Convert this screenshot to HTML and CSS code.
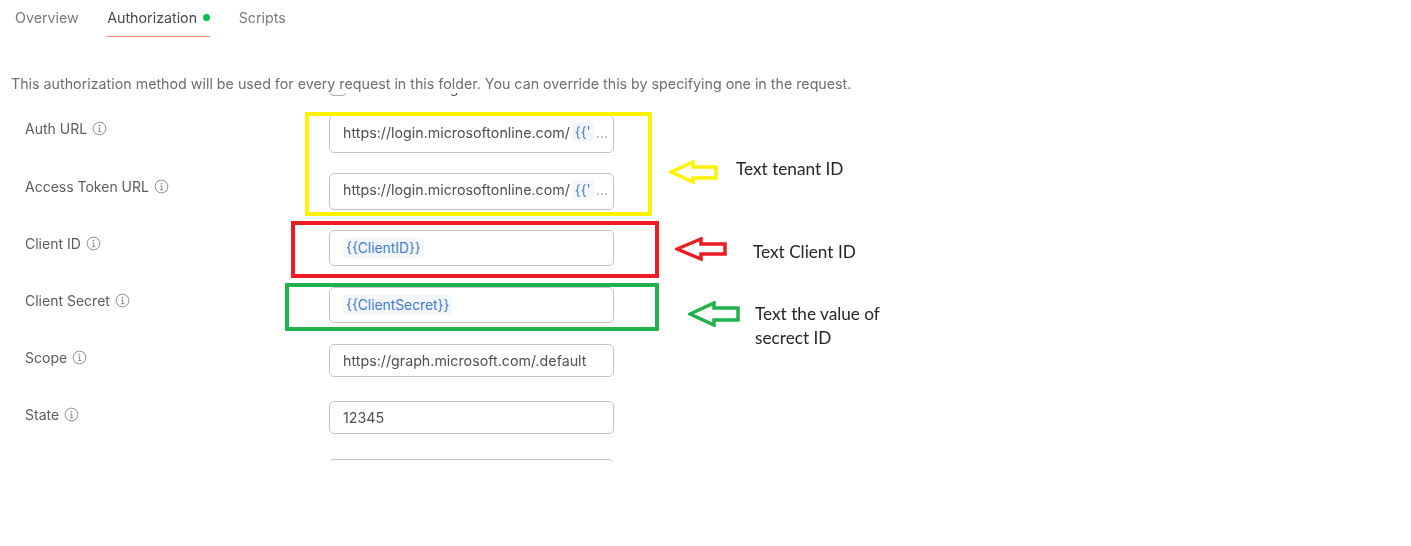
FILE: index.html
```html
<!DOCTYPE html>
<html lang="en">
<head>
  <meta charset="UTF-8">
  <meta name="viewport" content="width=device-width, initial-scale=1.0">
  <title>Folder Authorization</title>
  <link rel="stylesheet" href="styles.css">
</head>
<body>
  <!-- Tabs -->
  <div class="tabs">
    <div class="tab">Overview</div>
    <div class="tab active">Authorization <span class="dot"></span></div>
    <div class="tab">Scripts</div>
  </div>

  <p class="description">This authorization method will be used for every request in this folder. You can override this by specifying one in the request.</p>

  <!-- Form, scrolled so the top and bottom rows are cut off -->
  <div class="form">
    <div class="cut-row">
      <div class="cut-inner"><span class="checkbox"></span><span>Authorize using browser</span></div>
    </div>

    <div class="row first">
      <div class="label">Auth URL <svg class="info" viewBox="0 0 16 16"><circle cx="8" cy="8" r="6.8"/><path d="M6.6 7.3H8.2V11.4M6.4 11.4H10"/><circle class="info-dot" cx="8" cy="4.9" r="0.9"/></svg></div>
      <div class="field h38"><span class="value">https://login.microsoftonline.com/</span><span class="pill short">{{'</span><span class="more">...</span></div>
    </div>
    <div class="row">
      <div class="label">Access Token URL <svg class="info" viewBox="0 0 16 16"><circle cx="8" cy="8" r="6.8"/><path d="M6.6 7.3H8.2V11.4M6.4 11.4H10"/><circle class="info-dot" cx="8" cy="4.9" r="0.9"/></svg></div>
      <div class="field h37"><span class="value">https://login.microsoftonline.com/</span><span class="pill short">{{'</span><span class="more">...</span></div>
    </div>
    <div class="row">
      <div class="label">Client ID <svg class="info" viewBox="0 0 16 16"><circle cx="8" cy="8" r="6.8"/><path d="M6.6 7.3H8.2V11.4M6.4 11.4H10"/><circle class="info-dot" cx="8" cy="4.9" r="0.9"/></svg></div>
      <div class="field h36"><span class="pill">{{ClientID}}</span></div>
    </div>
    <div class="row">
      <div class="label">Client Secret <svg class="info" viewBox="0 0 16 16"><circle cx="8" cy="8" r="6.8"/><path d="M6.6 7.3H8.2V11.4M6.4 11.4H10"/><circle class="info-dot" cx="8" cy="4.9" r="0.9"/></svg></div>
      <div class="field h36"><span class="pill">{{ClientSecret}}</span></div>
    </div>
    <div class="row">
      <div class="label">Scope <svg class="info" viewBox="0 0 16 16"><circle cx="8" cy="8" r="6.8"/><path d="M6.6 7.3H8.2V11.4M6.4 11.4H10"/><circle class="info-dot" cx="8" cy="4.9" r="0.9"/></svg></div>
      <div class="field h33"><span class="value">https://graph.microsoft.com/.default</span></div>
    </div>
    <div class="row last">
      <div class="label">State <svg class="info" viewBox="0 0 16 16"><circle cx="8" cy="8" r="6.8"/><path d="M6.6 7.3H8.2V11.4M6.4 11.4H10"/><circle class="info-dot" cx="8" cy="4.9" r="0.9"/></svg></div>
      <div class="field h33"><span class="value">12345</span></div>
    </div>
    <div class="row">
      <div class="label"></div>
      <div class="field h33"></div>
    </div>
  </div>

  <!-- Annotations drawn over the screenshot -->
  <div class="mark mark-yellow"></div>
  <div class="mark mark-red"></div>
  <div class="mark mark-green"></div>

  <svg class="arrow arrow-yellow" viewBox="0 0 50 24"><path d="M2 12L24 2V7H47V18H24V22Z"/></svg>
  <svg class="arrow arrow-red" viewBox="0 0 52 24"><path d="M2 12L26 2V7H50V17H26V22Z"/></svg>
  <svg class="arrow arrow-green" viewBox="0 0 52 26"><path d="M2 13L26 2V7H50V19H26V24Z"/></svg>

  <div class="note note-tenant">Text tenant ID</div>
  <div class="note note-client">Text Client ID</div>
  <div class="note note-secret">Text the value of<br>secrect ID</div>
</body>
</html>
```

FILE: styles.css
```css
body {
  font-family: Inter, "Liberation Sans", sans-serif;
  font-size: 14.26px;
  margin: 0;
  padding: 0;
  background-color: #fff;
  color: #4f4f4f;
  height: 546px;
  overflow: hidden;
  position: relative;
  filter: blur(0.35px); /* the reference is a soft, rescaled screenshot */
}

/* Tabs */
.tabs {
  display: flex;
  gap: 28.5px;
  padding-left: 15px;
  height: 37px;
}
.tab {
  color: #7a7a7a;
  line-height: 36px;
  height: 37px;
  box-sizing: border-box;
}
.tab.active {
  color: #4a4a4a;
  border-bottom: 1px solid #f0845c;
  width: 103px;
  white-space: nowrap;
}
.dot {
  display: inline-block;
  width: 7px;
  height: 7px;
  margin-left: 2px;
  border-radius: 50%;
  background-color: #0cbb52;
  vertical-align: 2px;
}

.description {
  margin: 38px 0 0 11px;
  line-height: 18px;
  color: #6f6f6f;
  white-space: nowrap;
}

/* Form */
.form {
  height: 368px;
  overflow: hidden;
  padding-left: 25px;
}
.cut-row {
  height: 5px;
  margin-top: -2px;
  overflow: hidden;
  padding-left: 305px;
}
.cut-inner {
  display: flex;
  align-items: center;
  gap: 7px;
  height: 16px;
  margin-top: -11px;
  line-height: 16px;
  white-space: nowrap;
}
.checkbox {
  display: block;
  width: 14px;
  height: 14px;
  border: 1px solid #b0b0b0;
  border-radius: 3px;
}
.row {
  display: grid;
  grid-template-columns: 304px 285px;
  height: 57px;
}
.row.first {
  margin-top: 19px;
  height: 58px;
}
.row.last {
  height: 58px;
}
.label {
  font-size: 14px;
  color: #5c5c5c;
  display: flex;
  align-items: center;
  gap: 5px;
  height: 27px;
}
.info {
  width: 15px;
  height: 15px;
  fill: none;
  stroke: #8a8a8a;
  stroke-width: 1;
}
.info-dot {
  fill: #8a8a8a;
  stroke: none;
}
.field {
  display: flex;
  align-items: center;
  box-sizing: border-box;
  padding-left: 13px;
  border: 1px solid #c4c4c4;
  border-radius: 5px;
  white-space: nowrap;
  overflow: hidden;
}
.h38 { height: 38px; padding-bottom: 4px; }
.h37 { height: 37px; padding-bottom: 4px; }
.h36 { height: 36px; }
.h33 { height: 33px; }
.value {
  color: #505050;
}
.pill {
  display: inline-block;
  padding: 0 3px;
  margin-top: -1px;
  font-size: 13.8px;
  line-height: 20px;
  border-radius: 4px;
  background-color: #f3f6fb;
  color: #3f7cc8;
}
.pill.short {
  margin-left: 2px;
  margin-top: 0;
}
.more {
  color: #a0a0a0;
  margin-left: 2px;
}

/* Annotations */
.mark {
  position: absolute;
  box-sizing: border-box;
  border: 4px solid;
}
.mark-yellow {
  left: 305px;
  top: 112px;
  width: 347px;
  height: 104px;
  border-color: #fff200;
}
.mark-red {
  left: 291px;
  top: 221px;
  width: 368px;
  height: 57px;
  border-color: #ed1c24;
}
.mark-green {
  left: 285px;
  top: 283px;
  width: 374px;
  height: 48px;
  border-color: #22b14c;
}
.arrow {
  position: absolute;
  fill: #fff;
  stroke-width: 3.5;
}
.arrow-yellow {
  left: 669px;
  top: 160px;
  width: 50px;
  height: 24px;
  stroke: #fff200;
}
.arrow-red {
  left: 675px;
  top: 237px;
  width: 52px;
  height: 24px;
  stroke: #ed1c24;
}
.arrow-green {
  left: 688px;
  top: 301px;
  width: 52px;
  height: 26px;
  stroke: #22b14c;
}
.note {
  position: absolute;
  font-family: Lato, "Open Sans", sans-serif;
  font-size: 17.2px;
  line-height: 24px;
  color: #262626;
  white-space: nowrap;
}
.note-tenant {
  left: 736px;
  top: 157px;
}
.note-client {
  left: 753px;
  top: 240px;
}
.note-secret {
  left: 755px;
  top: 302px;
}
```
